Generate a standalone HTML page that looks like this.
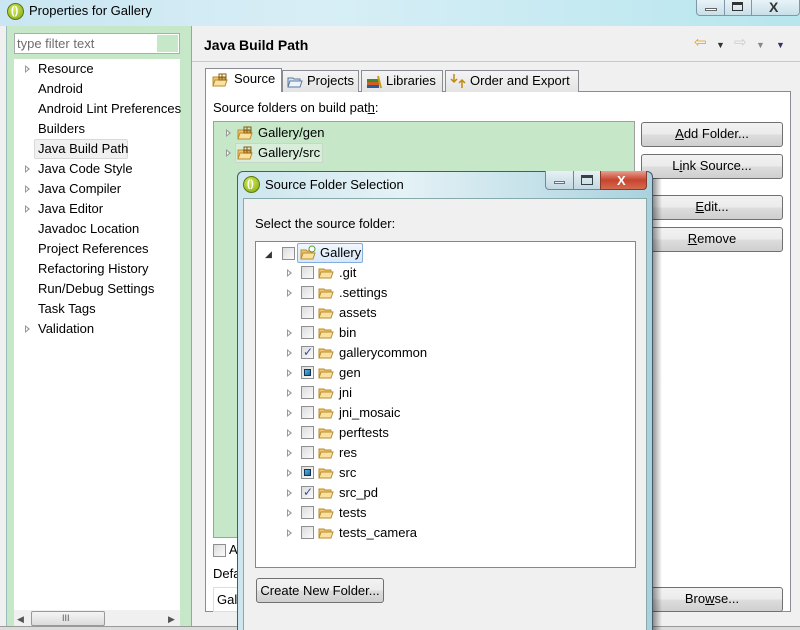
<!DOCTYPE html>
<html><head><meta charset="utf-8"><style>
*{box-sizing:border-box;margin:0;padding:0}
html{width:800px;height:630px;overflow:hidden}
body{width:800px;height:630px;overflow:hidden;position:relative;font-family:"Liberation Sans",sans-serif;font-size:13px;color:#000;background:#f0f0f0}
.a{position:absolute}
.t{position:absolute;white-space:nowrap;line-height:16px}
.btn{position:absolute;border:1px solid #707070;border-radius:3px;background:linear-gradient(#f2f2f2 0%,#ebebeb 50%,#dddddd 51%,#cfcfcf 100%);text-align:center;line-height:22px;font-size:13px}
.tri{position:absolute;width:0;height:0;border-top:4px solid transparent;border-bottom:4px solid transparent;border-left:5px solid #999}
.tri:after{content:"";position:absolute;left:-4px;top:-2px;border-top:2px solid transparent;border-bottom:2px solid transparent;border-left:2px solid #fff}
.cb{position:absolute;width:13px;height:13px;border:1px solid #8e8f8f;background:linear-gradient(135deg,#dcdcdc,#fbfbfb)}
.tab{position:absolute;top:70px;height:22px;border:1px solid #898c95;border-bottom:none;background:linear-gradient(#f4f4f4,#e3e3e3);line-height:20px;padding-left:24px}
</style></head><body>
<div class="a" style="left:0;top:0;width:800px;height:26px;background:linear-gradient(90deg,#c9e6f2,#d8eef6 40%,#b7e6ee)"></div>
<div class="a" style="left:7px;top:3px;width:17px;height:17px;border-radius:50%;background:radial-gradient(circle at 40% 35%,#d6ec5a,#7fa512);border:1px solid #5c7a10"></div>
<div class="t" style="left:11px;top:3px;font-size:11px;font-weight:bold;color:#fff">()</div>
<div class="t" style="left:29px;top:3px;font-size:13px">Properties for Gallery</div>
<div class="a" style="left:696px;top:0;width:104px;height:16px;border:1px solid #7f98a8;border-top:none;border-radius:0 0 4px 4px;background:linear-gradient(#e8f3f8,#c9dfe9)"></div>
<div class="a" style="left:724px;top:0;width:1px;height:16px;background:#7f98a8"></div>
<div class="a" style="left:751px;top:0;width:1px;height:16px;background:#7f98a8"></div>
<div class="a" style="left:705px;top:8px;width:12px;height:3px;border:1px solid #666;background:#fff"></div>
<div class="a" style="left:732px;top:2px;width:11px;height:9px;border:1px solid #333;border-top-width:3px"></div>
<div class="t" style="left:769px;top:-1px;font-size:14px;font-weight:bold;color:#333">X</div>
<div class="a" style="left:6px;top:26px;width:185px;height:604px;background:#c6e8c9;border-left:1px solid #9bb"></div>
<div class="a" style="left:14px;top:33px;width:166px;height:21px;background:#fff;border:1px solid #abadb3"></div>
<div class="a" style="left:157px;top:35px;width:21px;height:17px;background:#c6e8c9"></div>
<div class="t" style="left:17px;top:36px;color:#6d6d6d">type filter text</div>
<div class="a" style="left:14px;top:59px;width:166px;height:551px;background:#fff"></div>
<div class="a" style="left:34px;top:139px;width:94px;height:20px;background:#f0f0f0;border:1px solid #d9d9d9;border-radius:2px"></div>
<div class="tri" style="left:25px;top:65px"></div>
<div class="t" style="left:38px;top:61px">Resource</div>
<div class="t" style="left:38px;top:81px">Android</div>
<div class="t" style="left:38px;top:101px">Android Lint Preferences</div>
<div class="t" style="left:38px;top:121px">Builders</div>
<div class="t" style="left:38px;top:141px">Java Build Path</div>
<div class="tri" style="left:25px;top:165px"></div>
<div class="t" style="left:38px;top:161px">Java Code Style</div>
<div class="tri" style="left:25px;top:185px"></div>
<div class="t" style="left:38px;top:181px">Java Compiler</div>
<div class="tri" style="left:25px;top:205px"></div>
<div class="t" style="left:38px;top:201px">Java Editor</div>
<div class="t" style="left:38px;top:221px">Javadoc Location</div>
<div class="t" style="left:38px;top:241px">Project References</div>
<div class="t" style="left:38px;top:261px">Refactoring History</div>
<div class="t" style="left:38px;top:281px">Run/Debug Settings</div>
<div class="t" style="left:38px;top:301px">Task Tags</div>
<div class="tri" style="left:25px;top:325px"></div>
<div class="t" style="left:38px;top:321px">Validation</div>
<div class="a" style="left:14px;top:610px;width:166px;height:17px;background:#f0f0f0"></div>
<div class="a" style="left:31px;top:611px;width:74px;height:15px;border:1px solid #999;border-radius:2px;background:linear-gradient(#f4f4f4,#dcdcdc)"></div>
<div class="t" style="left:62px;top:610px;font-size:9px;color:#555">III</div>
<div class="t" style="left:17px;top:611px;font-size:9px;color:#555">◀</div>
<div class="t" style="left:168px;top:611px;font-size:9px;color:#555">▶</div>
<div class="a" style="left:0;top:626px;width:800px;height:4px;background:#dcdcdc;border-top:1px solid #999"></div>
<div class="a" style="left:191px;top:26px;width:609px;height:600px;background:#f0f0f0;border-left:1px solid #a0a0a0"></div>
<div class="a" style="left:192px;top:61px;width:608px;height:1px;background:#c8c8c8"></div>
<div class="t" style="left:204px;top:37px;font-weight:bold;font-size:14px">Java Build Path</div>
<div class="t" style="left:694px;top:35px;color:#e0a020;font-size:15px">⇦</div>
<div class="t" style="left:716px;top:37px;font-size:9px;color:#333">▼</div>
<div class="t" style="left:734px;top:35px;color:#ccc;font-size:15px">⇨</div>
<div class="t" style="left:756px;top:37px;font-size:9px;color:#888">▼</div>
<div class="t" style="left:776px;top:37px;font-size:9px;color:#336">▼</div>
<div class="a" style="left:205px;top:91px;width:586px;height:521px;background:#fff;border:1px solid #898c95"></div>
<div class="tab" style="left:282px;width:77px">Projects</div>
<div class="tab" style="left:361px;width:82px">Libraries</div>
<div class="tab" style="left:445px;width:134px">Order and Export</div>
<div class="tab" style="left:205px;top:68px;height:24px;width:77px;background:#fff;padding-left:28px">Source</div>
<svg class="a" style="left:212px;top:72px" width="16" height="16"><path d="M1 5h5l1 1h6v8H1z" fill="#eec56a" stroke="#b98d30"/><path d="M3 8h12l-2 6H1z" fill="#fbe1a0" stroke="#b98d30"/><path d="M7 2h7v6H7z M10 2v6 M7 5h7" fill="none" stroke="#8a5a10"/></svg>
<svg class="a" style="left:287px;top:74px" width="16" height="16"><path d="M1 4h5l1 1h6v8H1z" fill="#d6e4f2" stroke="#5a7aa0"/><path d="M3 7h12l-2 6H1z" fill="#eef4fb" stroke="#5a7aa0"/></svg>
<svg class="a" style="left:366px;top:74px" width="16" height="16"><rect x="1" y="5" width="12" height="3" fill="#3a8a3a"/><rect x="1" y="8" width="12" height="3" fill="#d06020"/><rect x="1" y="11" width="12" height="3" fill="#2a5aa0"/><path d="M12 2l3 12" stroke="#c0a020" stroke-width="2"/></svg>
<svg class="a" style="left:450px;top:73px" width="18" height="16"><path d="M4 1v8M1 6l3 3 3-3" fill="none" stroke="#c08a10" stroke-width="1.5"/><path d="M12 15V7M9 10l3-3 3 3" fill="none" stroke="#c08a10" stroke-width="1.5"/></svg>
<div class="t" style="left:213px;top:100px">Source folders on build pat<u>h</u>:</div>
<div class="a" style="left:213px;top:121px;width:422px;height:417px;background:#c6e8c9;border:1px solid #a0a0a0"></div>
<div class="tri" style="left:226px;top:129px"></div>
<svg class="a" style="left:237px;top:125px" width="16" height="16"><path d="M1 5h5l1 1h6v8H1z" fill="#eec56a" stroke="#b98d30"/><path d="M3 8h12l-2 6H1z" fill="#fbe1a0" stroke="#b98d30"/><path d="M7 2h7v6H7z M10 2v6 M7 5h7" fill="none" stroke="#8a5a10"/></svg>
<div class="t" style="left:258px;top:125px">Gallery/gen</div>
<div class="a" style="left:235px;top:143px;width:88px;height:20px;border:1px solid #c8d8c8;background:#d8eedb"></div>
<div class="tri" style="left:226px;top:149px"></div>
<svg class="a" style="left:237px;top:145px" width="16" height="16"><path d="M1 5h5l1 1h6v8H1z" fill="#eec56a" stroke="#b98d30"/><path d="M3 8h12l-2 6H1z" fill="#fbe1a0" stroke="#b98d30"/><path d="M7 2h7v6H7z M10 2v6 M7 5h7" fill="none" stroke="#8a5a10"/></svg>
<div class="t" style="left:258px;top:145px">Gallery/src</div>
<div class="btn" style="left:641px;top:122px;width:142px;height:25px"><u>A</u>dd Folder...</div>
<div class="btn" style="left:641px;top:154px;width:142px;height:25px">L<u>i</u>nk Source...</div>
<div class="btn" style="left:641px;top:195px;width:142px;height:25px"><u>E</u>dit...</div>
<div class="btn" style="left:641px;top:227px;width:142px;height:25px"><u>R</u>emove</div>
<div class="btn" style="left:641px;top:587px;width:142px;height:25px">Bro<u>w</u>se...</div>
<div class="cb" style="left:213px;top:544px"></div>
<div class="t" style="left:229px;top:542px">A</div>
<div class="t" style="left:213px;top:566px">Defa</div>
<div class="a" style="left:213px;top:587px;width:40px;height:25px;border:1px solid #ddd;background:#fff"></div>
<div class="t" style="left:217px;top:592px">Gal</div>
<div class="a" style="left:652px;top:178px;width:10px;height:452px;background:linear-gradient(90deg,rgba(0,0,0,.45),rgba(0,0,0,0))"></div>
<div class="a" style="left:237px;top:171px;width:416px;height:459px;border:1px solid #4a5a66;border-bottom:none;border-radius:6px 6px 0 0;background:linear-gradient(90deg,#cde6ee,#e4f2f6 40%,#a9d2de)"></div>
<div class="a" style="left:243px;top:198px;width:404px;height:432px;background:#f0f0f0;border:1px solid #8aa;border-bottom:none"></div>
<div class="a" style="left:243px;top:176px;width:17px;height:17px;border-radius:50%;background:radial-gradient(circle at 40% 35%,#d6ec5a,#7fa512);border:1px solid #5c7a10"></div>
<div class="t" style="left:247px;top:177px;font-size:10px;font-weight:bold;color:#fff">()</div>
<div class="t" style="left:265px;top:177px">Source Folder Selection</div>
<div class="a" style="left:545px;top:171px;width:102px;height:19px;border:1px solid #6d8896;border-top:none;border-radius:0 0 4px 4px;background:linear-gradient(#e7f1f5,#c3d8e1)"></div>
<div class="a" style="left:573px;top:171px;width:1px;height:18px;background:#6d8896"></div>
<div class="a" style="left:600px;top:171px;width:47px;height:19px;background:linear-gradient(#e8a090,#c7452e 50%,#d46a4e);border-radius:0 0 4px 0;border:1px solid #8a3a2c;border-top:none"></div>
<div class="a" style="left:554px;top:181px;width:11px;height:3px;border:1px solid #677;background:#eef"></div>
<div class="a" style="left:581px;top:175px;width:12px;height:10px;border:1px solid #344;border-top-width:3px"></div>
<div class="t" style="left:617px;top:173px;font-size:13px;font-weight:bold;color:#fff">X</div>
<div class="t" style="left:255px;top:216px">Select the source folder:</div>
<div class="a" style="left:255px;top:241px;width:381px;height:327px;background:#fff;border:1px solid #828790"></div>
<div class="t" style="left:265px;top:246px;font-size:9px;color:#333">◢</div>
<div class="cb" style="left:282px;top:247px"></div>
<div class="a" style="left:297px;top:243px;width:66px;height:20px;border:1px solid #84acdd;border-radius:2px;background:linear-gradient(#f1f7fd,#d8e8f9)"></div>
<svg class="a" style="left:300px;top:245px" width="16" height="16"><path d="M1 5h5l1 1h5v8H1z" fill="#eec56a" stroke="#b98d30"/><path d="M3 8h12l-2 6H1z" fill="#fbe1a0" stroke="#b98d30"/><circle cx="12" cy="4" r="3" fill="#fff" stroke="#5a9a3a"/></svg>
<div class="t" style="left:320px;top:245px">Gallery</div>
<div id="rows"></div>
<div class="btn" style="left:256px;top:578px;width:128px;height:25px;line-height:23px">Create New Folder...</div>
<script>
var r=[["",".git",1],["",".settings",1],["","assets",0],["","bin",1],["c","gallerycommon",1],["f","gen",1],["","jni",1],["","jni_mosaic",1],["","perftests",1],["","res",1],["f","src",1],["c","src_pd",1],["","tests",1],["","tests_camera",1]];
var h="";
for(var i=0;i<r.length;i++){var y=265+i*20;
if(r[i][2])h+='<div class="tri" style="left:287px;top:'+(y+4)+'px"></div>';
h+='<div class="cb" style="left:301px;top:'+(y+1)+'px"></div>';
if(r[i][0]=="f")h+='<div class="a" style="left:304px;top:'+(y+4)+'px;width:7px;height:7px;background:linear-gradient(135deg,#5ab3e0,#1a6aa0);border:1px solid #135"></div>';
if(r[i][0]=="c")h+='<div class="t" style="left:303px;top:'+(y-1)+'px;color:#3a4ea0;font-size:12px">✓</div>';
h+='<svg class="a" style="left:318px;top:'+(y)+'px" width="16" height="16"><path d="M1 4h5l1 1h6v8H1z" fill="#eec56a" stroke="#b98d30"/><path d="M3 7h12l-2 6H1z" fill="#fbe1a0" stroke="#b98d30"/></svg>';
h+='<div class="t" style="left:339px;top:'+y+'px">'+r[i][1]+'</div>';}
document.getElementById("rows").outerHTML=h;
</script>
</body></html>
